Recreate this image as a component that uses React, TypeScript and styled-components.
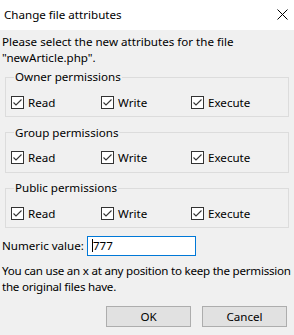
import styled, { createGlobalStyle } from 'styled-components';

const GlobalStyle = createGlobalStyle`
  html, body {
    margin: 0;
    padding: 0;
    background: #f0f0f0;
  }
  body {
    font-family: "Noto Sans", "Liberation Sans", sans-serif;
    font-size: 11.6px;
    color: #000;
  }
`;

const Window = styled.div`
  width: 294px;
  height: 335px;
  display: flex;
  flex-direction: column;
  background: #f0f0f0;
  overflow: hidden;
`;

const TitleBar = styled.div`
  height: 30px;
  flex: none;
  background: #ffffff;
  display: flex;
  align-items: center;
  justify-content: space-between;
  padding: 0 6px 2px 4px;
  box-sizing: border-box;
`;

const Title = styled.span`
  font-size: 11.6px;
`;

const Body = styled.div`
  display: flex;
  flex-direction: column;
  padding: 4px 0 0;
`;

const Paragraph = styled.p`
  margin: 0 0 0 2px;
  line-height: 16px;
  white-space: nowrap;
`;

const Group = styled.fieldset`
  margin: 3px 5px 4.5px;
  padding: 8px 5px 5px;
  border: 1px solid #dcdcdc;
  min-width: 0;
`;

const Legend = styled.legend`
  padding: 0 1px;
  margin-left: 3px;
  line-height: 16px;
`;

const Row = styled.div`
  display: grid;
  grid-template-columns: 90px 90px 1fr;
  height: 18px;
  align-items: center;
`;

const CheckLabel = styled.label`
  display: flex;
  align-items: center;
  gap: 4px;
`;

const ValueRow = styled.div`
  display: flex;
  align-items: center;
  gap: 3px;
  margin: 3px 0 0 2px;
`;

const Field = styled.div`
  width: 109px;
  height: 20px;
  box-sizing: border-box;
  border: 1px solid #0078d7;
  background: #fff;
  display: flex;
  align-items: center;
  padding-left: 4px;
`;

const Caret = styled.span`
  width: 1px;
  height: 13px;
  background: #000;
`;

const Hint = styled(Paragraph)`
  margin-top: 7px;
  letter-spacing: -0.24px;
`;

const Buttons = styled.div`
  display: flex;
  justify-content: flex-end;
  gap: 11px;
  padding: 11px 7px 0 0;
`;

const Button = styled.button`
  width: 85px;
  height: 21px;
  background: #e1e1e1;
  border: 1px solid #adadad;
  font-family: inherit;
  font-size: 11.6px;
  color: #000;
  padding: 0;
`;

const Check = () => (
  <svg width="13" height="13" viewBox="0 0 13 13">
    <rect x="0.5" y="0.5" width="12" height="12" fill="#fff" stroke="#333" />
    <path d="M2.5 6.5 L5 9 L10.5 3.5" fill="none" stroke="#333" strokeWidth="1.1" />
  </svg>
);

const CloseIcon = () => (
  <svg width="11" height="11" viewBox="0 0 11 11">
    <path d="M0.5 0.5 L10.5 10.5 M10.5 0.5 L0.5 10.5" stroke="#000" strokeWidth="1" />
  </svg>
);

const groups = ['Owner permissions', 'Group permissions', 'Public permissions'];
const perms = ['Read', 'Write', 'Execute'];

export default function App() {
  return (
    <Window>
      <GlobalStyle />
      <TitleBar>
        <Title>Change file attributes</Title>
        <CloseIcon />
      </TitleBar>
      <Body>
        <Paragraph>
          Please select the new attributes for the file
          <br />
          "newArticle.php".
        </Paragraph>
        {groups.map((g) => (
          <Group key={g}>
            <Legend>{g}</Legend>
            <Row>
              {perms.map((p) => (
                <CheckLabel key={p}>
                  <Check />
                  {p}
                </CheckLabel>
              ))}
            </Row>
          </Group>
        ))}
        <ValueRow>
          Numeric value:
          <Field>
            <Caret />
            777
          </Field>
        </ValueRow>
        <Hint>
          You can use an x at any position to keep the permission
          <br />
          the original files have.
        </Hint>
        <Buttons>
          <Button>OK</Button>
          <Button>Cancel</Button>
        </Buttons>
      </Body>
    </Window>
  );
}
